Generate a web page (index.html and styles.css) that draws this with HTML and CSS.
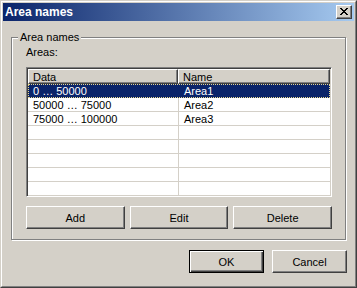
FILE: index.html
```html
<!DOCTYPE html>
<html lang="en">

<head>
    <meta charset="UTF-8">
    <meta name="viewport" content="width=device-width, initial-scale=1.0">
    <title>Area names</title>
    <link rel="stylesheet" href="styles.css">
</head>

<body>
    <div class="window">
        <div class="frame">
            <div class="titlebar">
                <span class="title">Area names</span>
                <button class="close" type="button">
                    <svg width="8" height="7" viewBox="0 0 8 7" shape-rendering="crispEdges">
                        <path d="M0 0h2v1h1v1h2v-1h1v-1h2v1h-1v1h-1v1h-1v1h1v1h1v1h1v1h-2v-1h-1v-1h-2v1h-1v1h-2v-1h1v-1h1v-1h1v-1h-1v-1h-1v-1h-1z" fill="#000"/>
                    </svg>
                </button>
            </div>

            <div class="body">
                <div class="group">
                    <span class="group-label">Area names</span>
                    <div class="field-label">Areas:</div>

                    <div class="list">
                        <div class="list-head">
                            <div class="col col-data">Data</div>
                            <div class="col col-name">Name</div>
                        </div>
                        <div class="row selected">
                            <div class="cell cell-data">0 … 50000</div>
                            <div class="cell cell-name">Area1</div>
                        </div>
                        <div class="row">
                            <div class="cell cell-data">50000 … 75000</div>
                            <div class="cell cell-name">Area2</div>
                        </div>
                        <div class="row">
                            <div class="cell cell-data">75000 … 100000</div>
                            <div class="cell cell-name">Area3</div>
                        </div>
                        <div class="row"><div class="cell cell-data"></div><div class="cell cell-name"></div></div>
                        <div class="row"><div class="cell cell-data"></div><div class="cell cell-name"></div></div>
                        <div class="row"><div class="cell cell-data"></div><div class="cell cell-name"></div></div>
                        <div class="row"><div class="cell cell-data"></div><div class="cell cell-name"></div></div>
                        <div class="row"><div class="cell cell-data"></div><div class="cell cell-name"></div></div>
                    </div>

                    <div class="group-buttons">
                        <button class="btn" type="button">Add</button>
                        <button class="btn" type="button">Edit</button>
                        <button class="btn" type="button">Delete</button>
                    </div>
                </div>

                <div class="dialog-buttons">
                    <button class="btn btn-default" type="button">OK</button>
                    <button class="btn" type="button">Cancel</button>
                </div>
            </div>
        </div>
    </div>
</body>

</html>
```

FILE: styles.css
```css
body {
    margin: 0;
    padding: 0;
    font-family: "Liberation Sans", Arial, sans-serif;
    font-size: 11px;
    line-height: 13px;
    color: #000;
    background-color: #d4d0c8;
}

.window {
    width: 357px;
    height: 288px;
    box-sizing: border-box;
    border: 1px solid;
    border-color: #d4d0c8 #404040 #404040 #d4d0c8;
    background-color: #d4d0c8;
}

.frame {
    height: 100%;
    box-sizing: border-box;
    border: 1px solid;
    border-color: #fff #808080 #808080 #fff;
    padding: 1px;
    display: flex;
    flex-direction: column;
}

/* barra de titulo */
.titlebar {
    height: 18px;
    display: flex;
    align-items: center;
    padding: 0 2px;
    background: linear-gradient(to right, #0a246a, #a6caf0);
}

.title {
    color: white;
    font-weight: bold;
    font-size: 12px;
    margin-left: 0;
}

.close {
    margin-left: auto;
    width: 16px;
    height: 14px;
    padding: 0;
    box-sizing: border-box;
    border: 1px solid;
    border-color: #fff #404040 #404040 #fff;
    box-shadow: inset -1px -1px 0 #808080;
    background-color: #d4d0c8;
    display: flex;
    align-items: center;
    justify-content: center;
}

.close svg {
    display: block;
    margin: 0 0 1px 0;
}

.body {
    flex: 1;
    padding: 16px 7px 0 8px;
    display: flex;
    flex-direction: column;
}

/* caixa de grupo */
.group {
    position: relative;
    width: 335px;
    box-sizing: border-box;
    border: 1px solid #808080;
    box-shadow: inset 1px 1px 0 #fff, 1px 1px 0 #fff;
    padding: 8px 13px 10px 14px;
}

.group-label {
    position: absolute;
    top: -7px;
    left: 6px;
    padding: 0 2px;
    background-color: #d4d0c8;
}

.field-label {
    height: 13px;
    margin-bottom: 8px;
}

.list {
    height: 130px;
    box-sizing: border-box;
    border: 1px solid;
    border-color: #808080 #fff #fff #808080;
    padding: 1px;
    box-shadow: inset 1px 1px 0 #404040, inset -1px -1px 0 #d4d0c8;
    background-color: white;
    overflow: hidden;
}

.list-head {
    display: flex;
    height: 15px;
}

.col {
    box-sizing: border-box;
    border: 1px solid;
    border-color: #fff #404040 #404040 #fff;
    box-shadow: inset -1px -1px 0 #808080;
    background-color: #d4d0c8;
    padding: 0 4px;
    line-height: 14px;
}

.col-data {
    width: 150px;
}

.col-name {
    flex: 1;
}

.row {
    display: flex;
    height: 14px;
    box-sizing: border-box;
    border-bottom: 1px solid #d4d0c8;
}

.cell {
    box-sizing: border-box;
    padding: 0 5px;
    line-height: 14px;
    white-space: nowrap;
}

.cell-data {
    width: 151px;
    border-right: 1px solid #d4d0c8;
}

.cell-name {
    flex: 1;
}

.row.selected {
    background-color: #0a246a;
    color: white;
    outline: 1px dotted #e8d890;
    outline-offset: -1px;
    border-bottom-color: #0a246a;
}

.row.selected .cell-data {
    border-right-color: #0a246a;
}

.group-buttons {
    display: grid;
    grid-template-columns: repeat(3, 1fr);
    gap: 5px;
    margin-top: 9px;
}

/* botoes */
.btn {
    height: 23px;
    box-sizing: border-box;
    font-family: "Liberation Sans", Arial, sans-serif;
    font-size: 11px;
    color: #000;
    background-color: #d4d0c8;
    border: 1px solid;
    border-color: #fff #404040 #404040 #fff;
    box-shadow: inset -1px -1px 0 #808080;
    padding: 0;
}

.dialog-buttons {
    display: flex;
    justify-content: flex-end;
    gap: 8px;
    margin-top: 10px;
}

.dialog-buttons .btn {
    width: 75px;
}

.btn-default {
    border-color: #000;
    box-shadow: inset 1px 1px 0 #fff, inset -1px -1px 0 #404040, inset -2px -2px 0 #808080;
}
```
